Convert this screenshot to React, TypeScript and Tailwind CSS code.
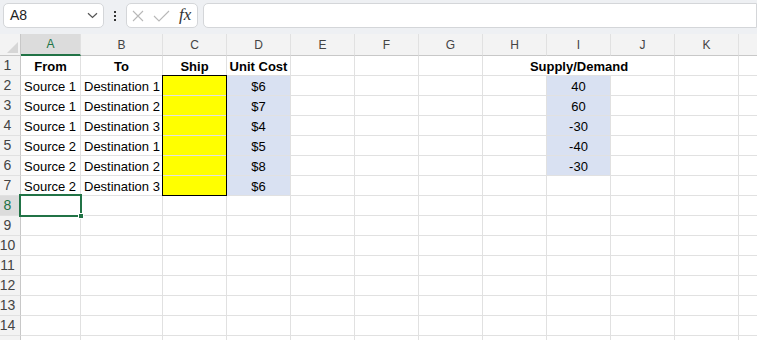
import React from "react";

const cols = ["A", "B", "C", "D", "E", "F", "G", "H", "I", "J", "K", "L"];

type Cell = { v?: string; bold?: boolean; center?: boolean; fill?: string; noRight?: boolean };

const rows: Record<number, Record<string, Cell>> = {
  1: {
    A: { v: "From", bold: true, center: true },
    B: { v: "To", bold: true, center: true },
    C: { v: "Ship", bold: true, center: true },
    D: { v: "Unit Cost", bold: true, center: true },
    H: { noRight: true },
    I: { v: "Supply/Demand", bold: true, center: true, noRight: true },
  },
};

const routes = [
  ["Source 1", "Destination 1", "$6", "40"],
  ["Source 1", "Destination 2", "$7", "60"],
  ["Source 1", "Destination 3", "$4", "-30"],
  ["Source 2", "Destination 1", "$5", "-40"],
  ["Source 2", "Destination 2", "$8", "-30"],
  ["Source 2", "Destination 3", "$6", ""],
];

routes.forEach((r, i) => {
  const row: Record<string, Cell> = {
    A: { v: r[0] },
    B: { v: r[1] },
    C: { fill: "yellow" },
    D: { v: r[2], center: true, fill: "blue" },
  };
  if (r[3]) row.I = { v: r[3], center: true, fill: "blue" };
  rows[i + 2] = row;
});

function GridCell({ cell }: { cell?: Cell }) {
  const fill =
    cell?.fill === "yellow" ? "bg-[#ffff00]" : cell?.fill === "blue" ? "bg-[#d9e1f2]" : "";
  return (
    <div
      className={`h-5 border-b border-[#e1e1e1] flex items-end leading-4 whitespace-nowrap ${
        cell?.noRight ? "" : "border-r"
      } ${cell?.center ? "justify-center" : "justify-start pl-[3px]"} ${cell?.bold ? "font-bold" : ""} ${fill}`}
    >
      {cell?.v}
    </div>
  );
}

export default function App() {
  // 15th row only shows its top edge at the bottom of the window
  const rowNums = Array.from({ length: 15 }, (_, i) => i + 1);

  return (
    <div
      className="w-[757px] h-[340px] overflow-hidden bg-white text-[13px] text-black"
      style={{ fontFamily: '"Liberation Sans", Arial, sans-serif' }}
    >
      {/* Toolbar */}
      <div className="h-[34px] bg-[#eef0f3] flex items-start pt-[3px] pl-[3px]">
        <div className="w-[101px] h-[25px] bg-white border border-[#d4d6d9] rounded-[5px] flex items-center justify-between pl-[6px] pr-[5px]">
          <span className="text-[14px] text-[#222]">A8</span>
          <svg width="11" height="7" viewBox="0 0 11 7" fill="none" stroke="#555" strokeWidth="1.2">
            <path d="M1 1.2l4.5 4.3 4.5-4.3" />
          </svg>
        </div>
        <div className="w-[22px] h-[25px] flex flex-col items-center justify-center gap-[2px]">
          <span className="w-[2px] h-[2px] bg-[#333]" />
          <span className="w-[2px] h-[2px] bg-[#333]" />
          <span className="w-[2px] h-[2px] bg-[#333]" />
        </div>
        <div className="w-[72px] h-[25px] bg-white border border-[#d4d6d9] rounded-[5px] flex items-center pl-[5px] gap-[9px]">
          <svg width="12" height="12" viewBox="0 0 12 12" stroke="#b8b8b8" strokeWidth="1.1">
            <path d="M1 1l10 10M11 1L1 11" />
          </svg>
          <svg width="17" height="12" viewBox="0 0 17 12" fill="none" stroke="#b8b8b8" strokeWidth="1.1">
            <path d="M1 6l5 5L16 1" />
          </svg>
          <span
            className="italic text-[17px] text-[#333] leading-none -mt-[2px]"
            style={{ fontFamily: '"Liberation Serif", "Times New Roman", serif' }}
          >
            fx
          </span>
        </div>
        <div className="ml-[5px] flex-1 h-[25px] bg-white border border-[#d4d6d9] rounded-l-[5px]" />
      </div>

      {/* Sheet */}
      <div className="relative grid grid-cols-[21px_60px_82px_64px_64px_64px_64px_64px_64px_64px_64px_64px_64px]">
        {/* column header row */}
        <div className="h-[22px] bg-[#f3f3f3] border-r border-b border-[#c8c8c8] relative">
          <svg className="absolute right-[2px] bottom-[2px]" width="11" height="11" viewBox="0 0 11 11">
            <path d="M11 0V11H0z" fill="#d6d6d6" />
          </svg>
        </div>
        {cols.map((c) =>
          c === "A" ? (
            <div
              key={c}
              className="h-[22px] bg-[#dcdcdc] border-r border-[#e1e1e1] border-b-2 border-b-[#217346] flex items-center justify-center text-[12px] text-[#217346]"
            >
              {c}
            </div>
          ) : (
            <div
              key={c}
              className="h-[22px] bg-[#f3f3f3] border-r border-[#e1e1e1] border-b border-b-[#c8c8c8] flex items-center justify-center text-[12px] text-[#444]"
            >
              {c === "L" ? "" : c}
            </div>
          )
        )}

        {rowNums.map((n) => (
          <React.Fragment key={n}>
            <div
              className={`h-5 border-r border-r-[#c8c8c8] border-b border-b-[#e1e1e1] flex items-center justify-center pr-[5px] text-[14px] ${
                n === 8 ? "bg-[#dcdcdc] text-[#217346]" : "bg-[#f3f3f3] text-[#444]"
              }`}
            >
              {n <= 14 ? n : ""}
            </div>
            {cols.map((c) => (
              <GridCell key={c} cell={rows[n]?.[c]} />
            ))}
          </React.Fragment>
        ))}

        {/* Ship range border */}
        <div className="absolute left-[162px] top-[41px] w-[65px] h-[121px] border border-black pointer-events-none" />

        {/* Active cell A8 */}
        <div className="absolute left-[19px] top-[160px] w-[63px] h-[23px] border-2 border-[#217346] pointer-events-none" />
        <div className="absolute left-[78px] top-[179px] w-[6px] h-[6px] bg-[#217346] border border-white" />
      </div>
    </div>
  );
}
